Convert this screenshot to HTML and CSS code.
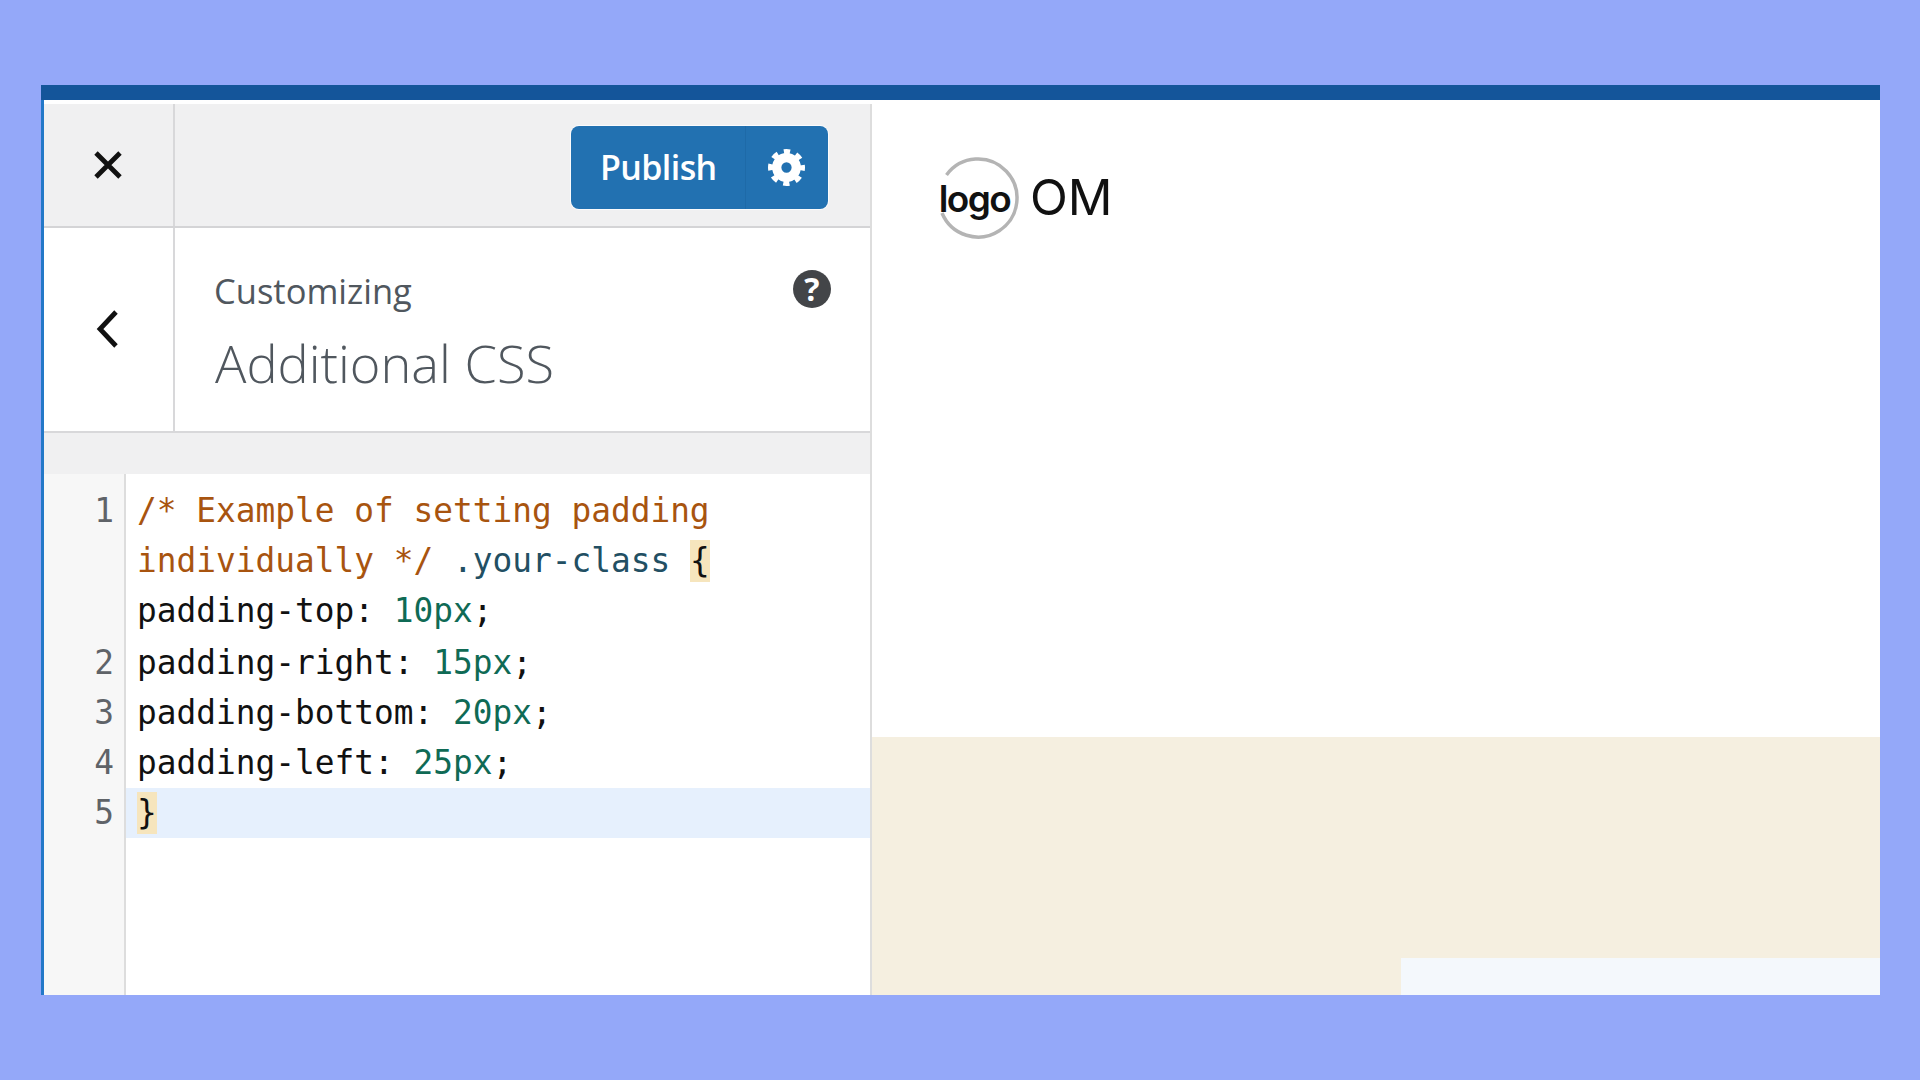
FILE: index.html
```html
<!DOCTYPE html>
<html lang="en">
<head>
<meta charset="utf-8">
<title>Additional CSS</title>
<link rel="stylesheet" href="styles.css">
</head>
<body>
<main class="window">
  <div class="topbar"></div>
  <div class="content">
    <aside class="sidebar">
      <header class="actions">
        <div class="close-cell">
          <svg class="close-icon" viewBox="0 0 32 32"><path d="M4 4 28 28M28 4 4 28"/></svg>
        </div>
        <div class="publish-cell">
          <div class="publish">
            <span class="publish-label">Publish</span>
            <span class="publish-gear">
              <svg class="gear" viewBox="0 0 36 36">
                <circle class="gear-ring" cx="18" cy="18" r="9.5"/>
                <circle class="gear-teeth" cx="18" cy="18" r="15.5"/>
              </svg>
            </span>
          </div>
        </div>
      </header>
      <section class="title-row">
        <div class="back-cell">
          <svg class="back-icon" viewBox="0 0 24 40"><path d="M20 3 4 20 20 37"/></svg>
        </div>
        <div class="title-cell">
          <div class="title-text">
            <div class="eyebrow">Customizing</div>
            <h1 class="title">Additional CSS</h1>
          </div>
          <span class="help">?</span>
        </div>
      </section>
      <div class="strip"></div>
      <section class="editor">
        <div class="row row-first">
          <span class="num">1</span>
          <code class="code"><span class="cm">/* Example of setting padding<br>individually */</span> <span class="sel">.your-class</span> <span class="bracket">{</span><br>padding-top: <span class="val">10px</span>;</code>
        </div>
        <div class="row"><span class="num">2</span><code class="code">padding-right: <span class="val">15px</span>;</code></div>
        <div class="row"><span class="num">3</span><code class="code">padding-bottom: <span class="val">20px</span>;</code></div>
        <div class="row"><span class="num">4</span><code class="code">padding-left: <span class="val">25px</span>;</code></div>
        <div class="row row-active"><span class="num">5</span><code class="code"><span class="bracket">}</span></code></div>
        <div class="gutter-fill"></div>
      </section>
    </aside>
    <section class="preview">
      <div class="brand">
        <div class="logo">
          <svg class="logo-ring" viewBox="0 0 84 84"><path d="M10.5 19A39 39 0 1 1 6 57"/></svg>
          <span class="logo-text">logo</span>
        </div>
        <span class="brand-name">OM</span>
      </div>
      <div class="band">
        <div class="band-box"></div>
      </div>
    </section>
  </div>
</main>
</body>
</html>
```
FILE: styles.css
```css
* { box-sizing: border-box; }
html, body { margin: 0; height: 100%; }
body {
  background: #94a8f9;
  padding: 85px 40px 85px 41px;
  font-family: "Open Sans", "Noto Sans", sans-serif;
}
.window {
  height: 910px;
  display: flex;
  flex-direction: column;
  background: #fff;
  border-left: 3px solid #2378c8;
}
.topbar { height: 15px; margin-left: -3px; background: #14559a; flex: none; }
.content { flex: 1; display: flex; min-height: 0; padding-top: 4px; }
.sidebar {
  width: 828px;
  flex: none;
  display: flex;
  flex-direction: column;
  border-right: 2px solid #ddd;
}
.actions { height: 124px; display: flex; background: #f0f0f1; border-bottom: 2px solid #d4d4d6; flex: none; }
.close-cell, .back-cell {
  width: 131px;
  flex: none;
  display: flex;
  align-items: center;
  justify-content: center;
  border-right: 2px solid #d8d8da;
}
.close-cell { padding: 0 1px 0 0; }
.back-cell { padding: 0 2px 2px 0; }
.close-icon { width: 32px; height: 32px; fill: none; stroke: #111; stroke-width: 4.8; }
.back-icon { width: 24px; height: 40px; fill: none; stroke: #111; stroke-width: 4.8; }
.publish-cell { flex: 1; display: flex; justify-content: flex-end; align-items: center; padding: 5px 42px 0 0; }
.publish {
  width: 257px;
  height: 83px;
  display: flex;
  align-items: center;
  background: #2271b1;
  border-radius: 8px;
  color: #fff;
  box-shadow: 0 0 0 1px #fbfbfc;
}
.publish-label { width: 174px; flex: none; padding-left: 29px; font-size: 34px; line-height: 83px; font-weight: 600; letter-spacing: -0.6px; }
.publish-gear { flex: 1; height: 83px; display: flex; align-items: center; justify-content: center; border-left: 1px solid #1e6aa8; padding-right: 2px; }
.gear { width: 37px; height: 37px; fill: none; stroke: #fff; }
.gear-ring { stroke-width: 9; }
.gear-teeth { stroke-width: 5; stroke-dasharray: 6.1 6.07; stroke-dashoffset: 3.05; }
.title-row { height: 205px; display: flex; background: #fff; border-bottom: 2px solid #d8d8da; flex: none; }
.title-cell { flex: 1; display: flex; justify-content: space-between; align-items: flex-start; padding: 0 39px 0 39px; }
.title-text { padding-top: 41px; }
.eyebrow { font-size: 34.5px; line-height: 44px; color: #50575e; }
.title { margin: 15px 0 0 1px; font-size: 52.3px; line-height: 70px; font-weight: 300; color: #50575e; }
.help {
  width: 38px;
  height: 38px;
  margin-top: 42px;
  border-radius: 50%;
  background: #434548;
  color: #fff;
  font-size: 32px;
  font-weight: 700;
  line-height: 38px;
  text-align: center;
}
.strip { height: 41px; background: #f0f0f1; flex: none; }
.editor { flex: 1; min-height: 0; display: flex; flex-direction: column; padding-top: 12px; font-family: "DejaVu Sans Mono", monospace; background: linear-gradient(to right, #f7f7f7 80px, #ddd 80px, #ddd 82px, #fff 82px); }
.row { display: flex; font-size: 32.8px; line-height: 50px; flex: none; }
.row-first { margin-bottom: 2px; }
.row-active { background: linear-gradient(to right, transparent 82px, #e6f0fd 82px); }
.num { width: 70px; flex: none; text-align: right; color: #5f6368; }
.code { flex: 1; padding-left: 23px; font: inherit; color: #111; white-space: pre; }
.cm { color: #a8540f; }
.sel { color: #224f63; }
.val { color: #0f6a55; }
.bracket { background: #f6e5bd; display: inline-block; line-height: 42px; }
.gutter-fill { flex: 1; }
.preview { flex: 1; min-width: 0; display: flex; flex-direction: column; justify-content: space-between; background: #fff; }
.brand { display: flex; align-items: center; gap: 10px; padding: 52px 0 0 64px; }
.logo { width: 84px; height: 84px; position: relative; display: flex; align-items: center; justify-content: center; }
.logo-ring { position: absolute; inset: 0; width: 84px; height: 84px; fill: none; stroke: #b4b4b4; stroke-width: 3.5; }
.logo-text { position: relative; font-family: "Inter", sans-serif; font-size: 37px; font-weight: 600; letter-spacing: -1.6px; color: #111; margin-left: -7px; }
.brand-name { font-family: "Inter", sans-serif; font-size: 49.5px; font-weight: 400; color: #111; margin-top: -2px; }
.band { height: 258px; display: flex; align-items: flex-end; justify-content: flex-end; background: #f5efe0; flex: none; }
.band-box { width: 479px; height: 37px; background: #f4f8fc; }
```
